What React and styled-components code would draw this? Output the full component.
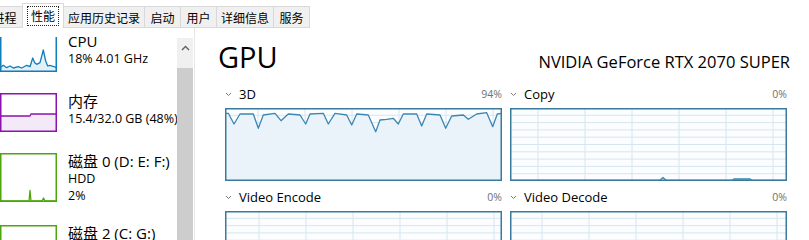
import styled, { createGlobalStyle } from 'styled-components'

const GlobalStyle = createGlobalStyle`
  html, body {
    margin: 0;
    padding: 0;
    background: #fff;
  }
  body {
    overflow: hidden;
    font-family: "Segoe UI", "Open Sans", "Noto Sans CJK SC", sans-serif;
    color: #000;
  }
`

const Window = styled.div`
  width: 809px;
  height: 240px;
  display: flex;
  flex-direction: column;
  overflow: hidden;
  background: #fff;
`

const TabStrip = styled.div`
  display: flex;
  align-items: flex-end;
  height: 28px;
  flex-shrink: 0;
  margin-left: -13px;
`

const Tab = styled.div`
  box-sizing: border-box;
  position: relative;
  z-index: ${(p) => (p.$active ? 1 : 0)};
  height: ${(p) => (p.$active ? 25 : 22)}px;
  min-width: 37px;
  padding: 0 4px;
  margin-left: -1px;
  display: flex;
  align-items: center;
  justify-content: center;
  font-family: "Microsoft YaHei UI", "Noto Sans CJK SC", sans-serif;
  font-size: 12px;
  white-space: nowrap;
  background: ${(p) => (p.$active ? '#fff' : '#f0f0f0')};
  border: 1px solid #d9d9d9;
  border-bottom: ${(p) => (p.$active ? 'none' : '1px solid #d9d9d9')};
`

const FocusRing = styled.span`
  border: 1px dotted #222;
  padding: 1px 3px;
  line-height: 16px;
`

const Body = styled.div`
  flex: 1;
  min-height: 0;
  display: flex;
`

const LeftPane = styled.div`
  box-sizing: border-box;
  width: 195px;
  flex-shrink: 0;
  display: flex;
  padding-right: 1px;
  border-right: 1px solid #e6e6e6;
`

const ListViewport = styled.div`
  width: 177px;
  margin-top: 9px;
  overflow: hidden;
`

const List = styled.div`
  margin-top: -4px;
  display: flex;
  flex-direction: column;
  gap: 21px;
`

const Item = styled.div`
  display: flex;
  align-items: flex-start;
  gap: 11px;
`

const ItemText = styled.div`
  display: flex;
  flex-direction: column;
  white-space: nowrap;
  min-width: 0;
`

const ItemTitle = styled.div`
  font-size: 15px;
  line-height: 17px;
`

const ItemSub = styled.div`
  font-size: 12.5px;
  line-height: 17px;
`

const Scrollbar = styled.div`
  width: 16px;
  margin-top: 10px;
  background: #f0f0f0;
  display: flex;
  flex-direction: column;
  align-items: center;
`

const ScrollArrow = styled.div`
  height: 20px;
  display: flex;
  align-items: center;
  justify-content: center;
`

const ScrollThumb = styled.div`
  align-self: stretch;
  flex: 1;
  margin-top: 10px;
  background: #cdcdcd;
`

const RightPane = styled.div`
  flex: 1;
  display: flex;
  flex-direction: column;
`

const Header = styled.div`
  display: flex;
  justify-content: space-between;
  align-items: baseline;
  padding: 0 19px 0 23px;
  margin-top: 11px;
`

const Title = styled.div`
  font-size: 29px;
  line-height: 36px;
`

const Model = styled.div`
  font-size: 16.5px;
`

const Grid = styled.div`
  display: grid;
  grid-template-columns: 1fr 1fr;
  column-gap: 8px;
  row-gap: 7px;
  padding: 0 22px 0 30px;
  margin-top: 10px;
`

const Cell = styled.div`
  display: flex;
  flex-direction: column;
  min-width: 0;
`

const CellHead = styled.div`
  display: flex;
  align-items: center;
  height: 18px;
  margin-bottom: 5px;
`

const Chevron = styled.svg`
  margin-right: 7px;
  flex-shrink: 0;
`

const CellName = styled.span`
  font-size: 13px;
`

const CellValue = styled.span`
  margin-left: auto;
  font-size: 10.5px;
  color: #707070;
`

const ChartSvg = styled.svg`
  display: block;
  flex-shrink: 0;
`

const toPoints = (pts) => pts.map(([x, y]) => `${x},${y}`).join(' ')

const Chart = ({ width, height, border, line, fill, bg = '#fff', gridOffset, points }) => {
  const hLines = []
  const vLines = []
  if (gridOffset !== undefined) {
    for (let k = 1; k < 10; k++) hLines.push((height * k) / 10)
    for (let x = gridOffset; x < width; x += 47) vLines.push(x)
  }
  const area = points ? [...points, [width, height], [0, height]] : null
  return (
    <ChartSvg
      width={width === 277 ? '100%' : width}
      height={height}
      viewBox={`0 0 ${width} ${height}`}
      preserveAspectRatio="none"
    >
      <rect x="0" y="0" width={width} height={height} fill={bg} />
      {hLines.map((y) => (
        <line key={'h' + y} x1="0" x2={width} y1={y} y2={y} stroke="#d6e6f0" strokeWidth="1" />
      ))}
      {vLines.map((x) => (
        <line key={'v' + x} x1={x} x2={x} y1="0" y2={height} stroke="#d6e6f0" strokeWidth="1" />
      ))}
      {area && fill && <polygon points={toPoints(area)} fill={fill} />}
      {points && (
        <polyline points={toPoints(points)} fill="none" stroke={line} strokeWidth="1.3" strokeLinejoin="round" />
      )}
      <rect x="0.75" y="0.75" width={width - 1.5} height={height - 1.5} fill="none" stroke={border} strokeWidth="1.5" />
    </ChartSvg>
  )
}

const gpu3d = [
  [0, 5.3], [3.3, 5.3], [9, 16], [15, 6], [28.3, 6], [33.3, 20.3], [38.3, 7], [50, 5.3],
  [56, 12.7], [63.3, 6], [75, 7], [80.7, 16], [85, 6], [98.3, 5.3], [103.3, 16], [110, 5.3],
  [121.7, 7], [126.7, 17], [131.7, 6], [143.3, 7], [150.7, 23.7], [155, 12], [161.7, 11.3],
  [168.3, 10.3], [173.3, 16], [178.3, 6], [191.7, 6], [196.7, 18], [201.7, 6], [215, 7],
  [220.7, 20.3], [226.7, 8], [238.3, 7], [243.3, 11.3], [251.7, 6], [261.7, 4.7],
  [267.7, 18.7], [272.3, 6], [277, 5.3],
]

const copyLine = [
  [0, 72.3], [150, 72.3], [153, 69.5], [156, 72.3], [222, 72.3], [224, 71], [240, 71],
  [242, 72.3], [277, 72.3],
]

const cpuLine = [
  [0, 34.7], [3.3, 32.3], [6.7, 34.7], [10, 33], [13.3, 35], [18.3, 33.7], [21.7, 35],
  [26.7, 32.3], [30, 33.7], [32.7, 25], [34.7, 29.7], [36.7, 31.3], [40, 29.7], [43.3, 17],
  [45.7, 28], [47.7, 33], [50, 32.3], [57, 34.7],
]

const memLine = [[0, 23], [30, 23], [31, 21], [57, 21]]

const diskLine = [
  [0, 48], [29, 48], [30, 37.5], [31, 48], [42, 48], [43.5, 45], [45, 48], [57, 48],
]

const tabs = ['进程', '性能', '应用历史记录', '启动', '用户', '详细信息', '服务']

const resources = [
  { name: 'CPU', lines: ['18% 4.01 GHz'], h: 39, border: '#117dbb', line: '#117dbb', fill: '#e3f0f8', points: cpuLine },
  { name: '内存', lines: ['15.4/32.0 GB (48%)'], h: 39, border: '#8b12ae', line: '#8b12ae', fill: '#f4eaf7', points: memLine },
  { name: '磁盘 0 (D: E: F:)', lines: ['HDD', '2%'], h: 49, border: '#4da60c', line: '#4da60c', fill: '#eef7e6', points: diskLine },
  { name: '磁盘 2 (C: G:)', lines: ['SSD', '0%'], h: 49, border: '#4da60c', line: '#4da60c', fill: '#eef7e6', points: null },
]

const engines = [
  { name: '3D', value: '94%', offset: 33, points: gpu3d },
  { name: 'Copy', value: '0%', offset: 28, points: copyLine },
  { name: 'Video Encode', value: '0%', offset: 34, points: null },
  { name: 'Video Decode', value: '0%', offset: 32, points: null },
]

const App = () => {
  return (
    <Window>
      <GlobalStyle />
      <TabStrip>
        {tabs.map((t) => (
          <Tab key={t} $active={t === '性能'}>
            {t === '性能' ? <FocusRing>{t}</FocusRing> : t}
          </Tab>
        ))}
      </TabStrip>
      <Body>
        <LeftPane>
          <ListViewport>
            <List>
              {resources.map((r) => (
                <Item key={r.name}>
                  <Chart width={57} height={r.h} border={r.border} line={r.line} fill={r.fill} points={r.points} />
                  <ItemText>
                    <ItemTitle>{r.name}</ItemTitle>
                    {r.lines.map((l) => (
                      <ItemSub key={l}>{l}</ItemSub>
                    ))}
                  </ItemText>
                </Item>
              ))}
            </List>
          </ListViewport>
          <Scrollbar>
            <ScrollArrow>
              <svg width="9" height="6" viewBox="0 0 9 6">
                <path d="M1 5 L4.5 1.5 L8 5" fill="none" stroke="#606060" strokeWidth="1.4" />
              </svg>
            </ScrollArrow>
            <ScrollThumb />
          </Scrollbar>
        </LeftPane>
        <RightPane>
          <Header>
            <Title>GPU</Title>
            <Model>NVIDIA GeForce RTX 2070 SUPER</Model>
          </Header>
          <Grid>
            {engines.map((e) => (
              <Cell key={e.name}>
                <CellHead>
                  <Chevron width="7" height="5" viewBox="0 0 7 5">
                    <path d="M1 1 L3.5 3.5 L6 1" fill="none" stroke="#7a7a7a" strokeWidth="1" />
                  </Chevron>
                  <CellName>{e.name}</CellName>
                  <CellValue>{e.value}</CellValue>
                </CellHead>
                <Chart
                  width={277}
                  height={73}
                  border="#3a7a9c"
                  line="#3d86b2"
                  fill="#eaf3f9"
                  bg="#fbfdfe"
                  gridOffset={e.offset}
                  points={e.points}
                />
              </Cell>
            ))}
          </Grid>
        </RightPane>
      </Body>
    </Window>
  )
}

export default App
